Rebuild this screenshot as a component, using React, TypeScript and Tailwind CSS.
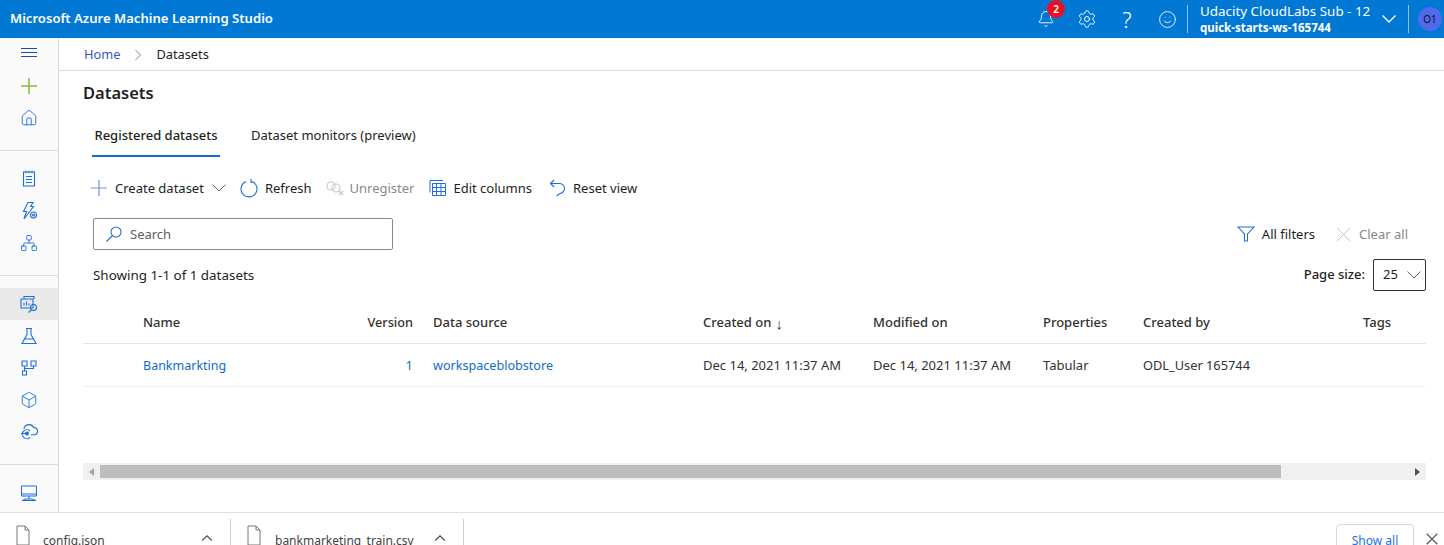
import { Bell, Box, ChevronUp, Home, Network, Settings, Smile } from "lucide-react"
import type { ReactNode } from "react"

const blue = "#1f6fdc"

function Svg({ size = 20, children, color = blue, sw = 1.1 }: { size?: number; children: ReactNode; color?: string; sw?: number }) {
  return (
    <svg width={size} height={size} viewBox="0 0 20 20" fill="none" stroke={color} strokeWidth={sw}>
      {children}
    </svg>
  )
}

// wide flat chevron, lucide's is too narrow at this size
function Chev({ color = "#666", sw = 1, className = "" }: { color?: string; sw?: number; className?: string }) {
  return (
    <svg width="14" height="8" viewBox="0 0 14 8" fill="none" stroke={color} strokeWidth={sw} className={className}>
      <path d="m.5.5 6.5 6.5 6.5-6.5" />
    </svg>
  )
}

function Cross({ size = 16, color = "#c0c0c0", sw = 1, className = "" }: { size?: number; color?: string; sw?: number; className?: string }) {
  return (
    <svg width={size} height={size} viewBox="0 0 16 16" fill="none" stroke={color} strokeWidth={sw} className={className}>
      <path d="m1 1 14 14M15 1 1 15" />
    </svg>
  )
}

function PlusMark({ color, sw = 1.2 }: { color: string; sw?: number }) {
  return (
    <svg width="16" height="16" viewBox="0 0 16 16" fill="none" stroke={color} strokeWidth={sw}>
      <path d="M8 0v16M0 8h16" />
    </svg>
  )
}

function NavRow({ children, active }: { children: ReactNode; active?: boolean }) {
  return <div className={`flex h-8 items-center justify-center ${active ? "bg-[#e9e9e9]" : ""}`}>{children}</div>
}

function Sidebar() {
  return (
    <aside className="flex w-[59px] shrink-0 flex-col border-r border-[#dedede] bg-[#fafafa]">
      <div className="border-b border-[#dedede] pb-4">
        <div className="flex h-[30px] items-center justify-center">
          <svg width="16" height="10" viewBox="0 0 16 10" fill="none" stroke="#1a4fa0" strokeWidth={1}>
            <path d="M0 .5h16M0 4.5h16M0 8.5h16" />
          </svg>
        </div>
        <div className="mt-[2px]">
          <NavRow><PlusMark color="#84bd3a" sw={1.5} /></NavRow>
          <NavRow><Home size={18} strokeWidth={1.2} color={blue} /></NavRow>
        </div>
      </div>
      <div className="border-b border-[#dedede] pb-4 pt-3">
        <NavRow>
          <Svg>
            <path d="M4.5 3h11v14h-11zM7 1.8v2.4M10 1.8v2.4M13 1.8v2.4M7 7.5h6M7 10.5h6M7 13.5h6" />
          </Svg>
        </NavRow>
        <NavRow>
          <Svg>
            <path d="M9 1.5h5l-2.5 4h3L5 18l2.5-7.5H4.5z" />
            <circle cx="14.5" cy="14" r="3" />
            <circle cx="14.5" cy="14" r="1" />
          </Svg>
        </NavRow>
        <NavRow><Network size={18} strokeWidth={1.2} color={blue} /></NavRow>
      </div>
      <div className="border-b border-[#dedede] pb-4 pt-3">
        <NavRow active>
          <Svg>
            <path d="M5 5V2.5h10V5M2 5h12v9H2z" />
            <path d="M5 11.5V9M7.5 11.5V7.5M10 11.5v-2" />
            <circle cx="14.5" cy="13.5" r="3" />
            <path d="M12.5 16 9.5 18.5" />
          </Svg>
        </NavRow>
        <NavRow>
          <Svg>
            <path d="M7 2.5h6M8 2.5v6L3 17.5h14l-5-9v-6M5.5 13h9" />
          </Svg>
        </NavRow>
        <NavRow>
          <Svg>
            <path d="M3 3h5v5H3zM12 3h5v5h-5zM3.5 13h4v4h-4zM5.5 8v5M14.5 8v2.5h-9" />
          </Svg>
        </NavRow>
        <NavRow><Box size={18} strokeWidth={1.2} color={blue} /></NavRow>
        <NavRow>
          <Svg>
            <path d="M5 7a5 5 0 0 1 9.5-1.5 3.7 3.7 0 0 1 1.5 7.2h-4" />
            <path d="M11 15.5A4.5 4.5 0 1 1 11 9" />
            <path d="M2 11.5h5" />
            <circle cx="8" cy="11.5" r="1.4" fill={blue} />
          </Svg>
        </NavRow>
      </div>
      <div className="pt-3">
        <NavRow>
          <Svg sw={1}>
            <path d="M2.5 3h15v10h-15zM10 13v3M3 17.5l4-1.5h6l4 1.5zM2.5 11h15" />
          </Svg>
        </NavRow>
      </div>
    </aside>
  )
}

function TopBar() {
  return (
    <header className="flex h-[38px] shrink-0 items-center bg-[#0078d4] pl-[10px] text-white">
      <div className="text-[13.1px] font-semibold">Microsoft Azure Machine Learning Studio</div>
      <div className="ml-auto flex items-center">
        <div className="relative mr-[22px]">
          <Bell size={18} strokeWidth={1.2} />
          <span className="absolute -right-[10px] -top-[10px] flex h-[18px] w-[18px] items-center justify-center rounded-full bg-[#e81123] text-[10px] font-semibold">2</span>
        </div>
        <Settings size={20} strokeWidth={1.1} className="mr-[21px]" />
        <span className="mr-[22px] w-[18px] text-center text-[22px] font-light leading-none">?</span>
        <Smile size={19} strokeWidth={1.1} className="mr-[10px]" />
        <div className="h-[28px] w-px bg-[#8fc3ec]" />
        <div className="ml-3 w-[182px] whitespace-nowrap leading-none">
          <div className="text-[13.4px] leading-[18px]">Udacity CloudLabs Sub - 12</div>
          <div className="text-[11.5px] font-bold leading-[16px]">quick-starts-ws-165744</div>
        </div>
        <Chev color="#fff" sw={1.4} />
        <div className="ml-[12px] h-[28px] w-px bg-[#8fc3ec]" />
        <div className="ml-[9px] mr-[2px] flex h-[24px] w-[24px] items-center justify-center rounded-full bg-[#4f6bed] text-[10px] text-[#111]">O1</div>
      </div>
    </header>
  )
}

function Toolbar() {
  return (
    <div className="ml-[8px] mt-[21px] flex h-[20px] items-center text-[13px] [&>span]:pt-[2px]">
      <PlusMark color="#7f8ce6" />
      <span className="ml-[8px]">Create dataset</span>
      <Chev className="ml-[8px]" />
      <svg width="20" height="20" viewBox="0 0 20 20" fill="none" stroke={blue} strokeWidth={1.1} className="ml-[13px]">
        <path d="M7 3.5A8 8 0 1 0 13 3.5M12 .8v3.4h3.4" />
      </svg>
      <span className="ml-[6px]">Refresh</span>
      <svg width="20" height="16" viewBox="0 0 20 16" fill="none" stroke="#c8c8c8" strokeWidth={1.1} className="ml-[14px]">
        <circle cx="6" cy="6" r="4" />
        <circle cx="11" cy="8" r="4" />
        <path d="m14 11 4 4m0-4-4 4" />
      </svg>
      <span className="ml-[4px] text-[#8a8886]">Unregister</span>
      <svg width="18" height="18" viewBox="0 0 18 18" fill="none" stroke={blue} strokeWidth={1} className="ml-[15px]">
        <path d="M1 1.5h13M1 1.5v12M3.5 4.5h13v12h-13zM3.5 8.5h13M3.5 12.5h13M7.5 4.5v12M12 4.5v12" />
      </svg>
      <span className="ml-[6px]">Edit columns</span>
      <svg width="18" height="18" viewBox="0 0 18 18" fill="none" stroke={blue} strokeWidth={1.1} className="ml-[17px]">
        <path d="M2 4.5h8a5 5 0 0 1 1 10L7.5 17M5 1 1.5 4.5 5 8" />
      </svg>
      <span className="ml-[6px]">Reset view</span>
    </div>
  )
}

function DatasetTable() {
  const gridCols = "grid grid-cols-[190px_80px_290px_170px_170px_100px_220px_1fr] items-center pl-[60px]"
  return (
    <div className="mt-[12px] w-[1343px] text-[13px]">
      <div className={`${gridCols} h-[41px] border-b border-[#e4e4e4] font-medium text-[#323130]`}>
        <div>Name</div>
        <div className="text-right text-[12.7px]">Version</div>
        <div className="pl-5">Data source</div>
        <div className="flex items-center">
          Created on <span className="ml-[4px] text-[15px] font-light">↓</span>
        </div>
        <div>Modified on</div>
        <div>Properties</div>
        <div>Created by</div>
        <div>Tags</div>
      </div>
      <div className={`${gridCols} h-[43px] border-b border-[#f0f0f0] pt-[2px] text-[#323130]`}>
        <div className="text-[12.5px] text-[#0f6cd0]">Bankmarkting</div>
        <div className="text-right text-[#0f6cd0]">1</div>
        <div className="pl-5 text-[12.6px] text-[#0f6cd0]">workspaceblobstore</div>
        <div>Dec 14, 2021 11:37 AM</div>
        <div>Dec 14, 2021 11:37 AM</div>
        <div>Tabular</div>
        <div className="text-[12.8px]">ODL_User 165744</div>
        <div />
      </div>
    </div>
  )
}

function ScrollBar() {
  return (
    <div className="mt-[76px] flex h-[17px] w-[1343px] items-center bg-[#f0f0f0]">
      <div className="flex w-[17px] justify-center">
        <div className="h-0 w-0 border-y-[4px] border-r-[5px] border-y-transparent border-r-[#a3a3a3]" />
      </div>
      <div className="h-[13px] w-[1181px] bg-[#bdbdbd]" />
      <div className="ml-auto flex w-[17px] justify-center">
        <div className="h-0 w-0 border-y-[4px] border-l-[5px] border-y-transparent border-l-[#505050]" />
      </div>
    </div>
  )
}

function DownloadItem({ name, width, gap }: { name: string; width: string; gap: string }) {
  return (
    <div className={`flex h-full items-start border-r border-[#d0d0d0] ${width}`}>
      <svg width="14" height="20" viewBox="0 0 14 20" fill="none" stroke="#777" strokeWidth={1} className="ml-[16px] mt-[6px]">
        <path d="M1 1h8l4 4v15H1zM9 1v4h4" />
      </svg>
      <span className={`mt-[13px] text-[12px] text-[#444] ${gap}`}>{name}</span>
      <ChevronUp size={18} strokeWidth={1.5} color="#555" className="ml-auto mr-[14px] mt-[10px]" />
    </div>
  )
}

export default function App() {
  return (
    <div className="flex h-[545px] w-[1444px] flex-col overflow-hidden bg-white font-['Noto_Sans',sans-serif] text-[#201f1e]">
      <TopBar />
      <div className="flex min-h-0 flex-1">
        <Sidebar />
        <main className="flex min-w-0 flex-1 flex-col">
          <div className="flex h-[33px] shrink-0 items-center border-b border-[#dcdcdc] pl-[25px] pt-[2px] text-[12.8px]">
            <span className="text-[#3b57c4]">Home</span>
            <svg width="8" height="12" viewBox="0 0 8 12" fill="none" stroke="#888" className="mx-[14px]">
              <path d="m1.5 1 5 5-5 5" />
            </svg>
            <span>Datasets</span>
          </div>
          <div className="pl-[24px]">
            <h1 className="mt-[9px] text-[16.5px] font-semibold leading-[26px]">Datasets</h1>
            <div className="ml-[9px] mt-[16px] flex whitespace-nowrap text-[13px]">
              <div className="flex h-[35px] w-[128px] items-start justify-center border-b-2 border-[#0f6cd0] pt-[4px] font-medium">Registered datasets</div>
              <div className="ml-[31px] pt-[4px]">Dataset monitors (preview)</div>
            </div>
            <Toolbar />
            <div className="mt-[20px] flex h-[32px] items-center pr-[36px]">
              <div className="ml-[10px] flex h-[32px] w-[300px] items-center rounded-[2px] border border-[#8a8886] pl-[11px] text-[13px] text-[#605e5c]">
                <svg width="18" height="18" viewBox="0 0 18 18" fill="none" stroke={blue} strokeWidth={1.1}>
                  <circle cx="11" cy="7" r="5" />
                  <path d="M7.5 10.5 1.5 16.5" />
                </svg>
                <span className="ml-[7px] pt-[2px]">Search</span>
              </div>
              <div className="ml-auto flex items-center text-[13px] [&>span]:pt-[2px]">
                <svg width="18" height="18" viewBox="0 0 18 18" fill="none" stroke={blue} strokeWidth={1.1}>
                  <path d="M1 2h16l-6.5 7v7h-3V9z" />
                </svg>
                <span className="ml-[7px]">All filters</span>
                <Cross size={15} className="ml-[21px]" />
                <span className="ml-[8px] text-[#8a8886]">Clear all</span>
              </div>
            </div>
            <div className="ml-[10px] mt-[9px] flex h-[32px] items-center pr-[18px] text-[13.4px]">
              <span>Showing 1-1 of 1 datasets</span>
              <span className="ml-auto text-[13px] font-medium">Page size:</span>
              <div className="ml-[8px] flex h-[32px] w-[53px] items-center rounded-[2px] border border-[#323130] pl-[9px] text-[13px]">
                25
                <Chev className="ml-[9px]" />
              </div>
            </div>
            <DatasetTable />
            <ScrollBar />
          </div>
        </main>
      </div>
      <footer className="flex h-[33px] shrink-0 items-start border-t border-[#dedede] bg-white">
        <div className="mt-[6px] flex h-[40px]">
          <DownloadItem name="config.json" width="w-[231px]" gap="ml-[13px]" />
          <DownloadItem name="bankmarketing_train.csv" width="w-[233px]" gap="ml-[14px]" />
        </div>
        <div className="ml-auto mr-[12px] mt-[11px] flex h-[40px] w-[78px] items-start justify-center rounded-[4px] border border-[#d8d8d8] pt-[7px] text-[12px] text-[#1a73e8]">Show all</div>
        <Cross size={12} color="#555" sw={1.6} className="mr-[6px] mt-[20px]" />
      </footer>
    </div>
  )
}
